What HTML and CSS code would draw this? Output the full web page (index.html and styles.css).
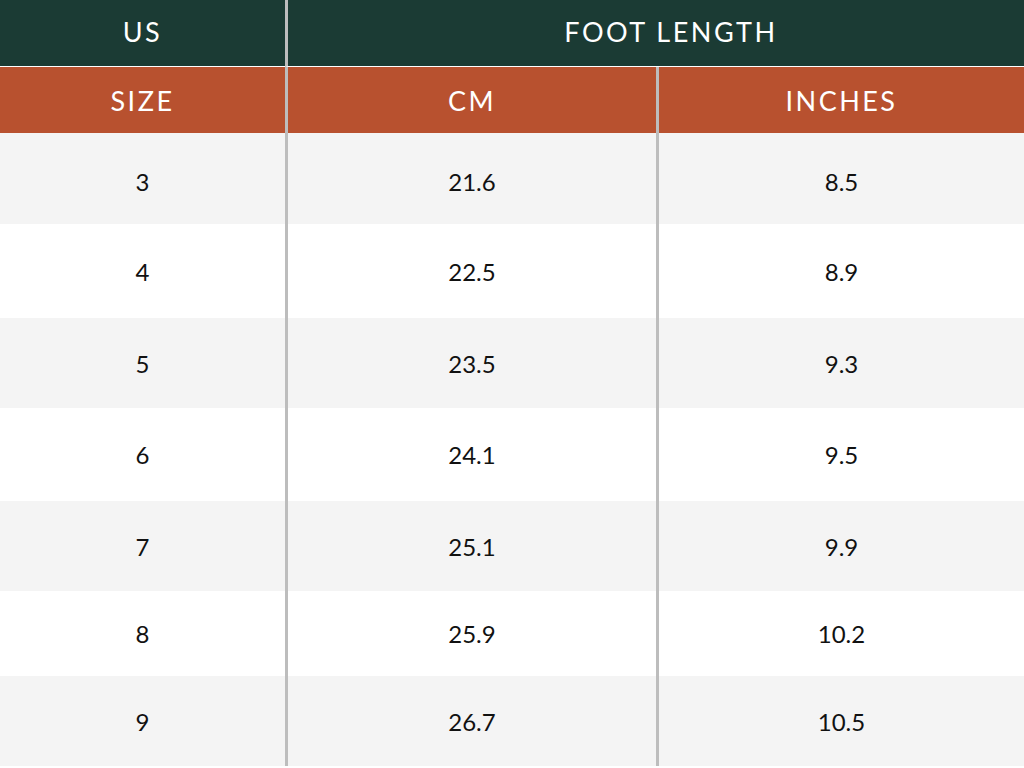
FILE: index.html
```html
<!DOCTYPE html>
<html>
<head>
<meta charset="utf-8">
<link rel="stylesheet" href="styles.css">
</head>
<body>
<div class="chart">
  <div class="cell head1">US</div>
  <div class="cell head1 foot sep">FOOT LENGTH</div>

  <div class="cell head2">SIZE</div>
  <div class="cell head2 sep">CM</div>
  <div class="cell head2 sep">INCHES</div>

  <div class="cell g first">3</div><div class="cell g sep first">21.6</div><div class="cell g sep first">8.5</div>
  <div class="cell">4</div><div class="cell sep">22.5</div><div class="cell sep">8.9</div>
  <div class="cell g">5</div><div class="cell g sep">23.5</div><div class="cell g sep">9.3</div>
  <div class="cell">6</div><div class="cell sep">24.1</div><div class="cell sep">9.5</div>
  <div class="cell g">7</div><div class="cell g sep">25.1</div><div class="cell g sep">9.9</div>
  <div class="cell">8</div><div class="cell sep">25.9</div><div class="cell sep">10.2</div>
  <div class="cell g">9</div><div class="cell g sep">26.7</div><div class="cell g sep">10.5</div>
</div>
</body>
</html>
```

FILE: styles.css
```css
html, body {
  margin: 0;
  padding: 0;
  background: #ffffff;
}

.chart {
  display: grid;
  width: 1024px;
  grid-template-columns: 285px 371px 368px;
  grid-template-rows: 67px 66px 91px 94px 90px 93px 90px 85px 90px;
  font-family: "Lato", "Liberation Sans", sans-serif;
}

.cell {
  display: flex;
  align-items: center;
  justify-content: center;
  font-size: 24px;
  color: #111111;
  background: #ffffff;
  box-sizing: border-box;
}

.cell.g {
  background: #f4f4f4;
}

.cell.first {
  padding-top: 5px;
}

.sep {
  border-left: 3px solid #bdbdbd;
}

.head1 {
  background: #1b3b34;
  color: #ffffff;
  font-size: 27px;
  letter-spacing: 2.5px;
  border-bottom: 1px solid #ffffff;
  padding-bottom: 4px;
}

.foot {
  grid-column: 2 / 4;
  padding-left: 30px;
}

.head2 {
  background: #b8512f;
  color: #ffffff;
  font-size: 27px;
  letter-spacing: 2.5px;
}
```
